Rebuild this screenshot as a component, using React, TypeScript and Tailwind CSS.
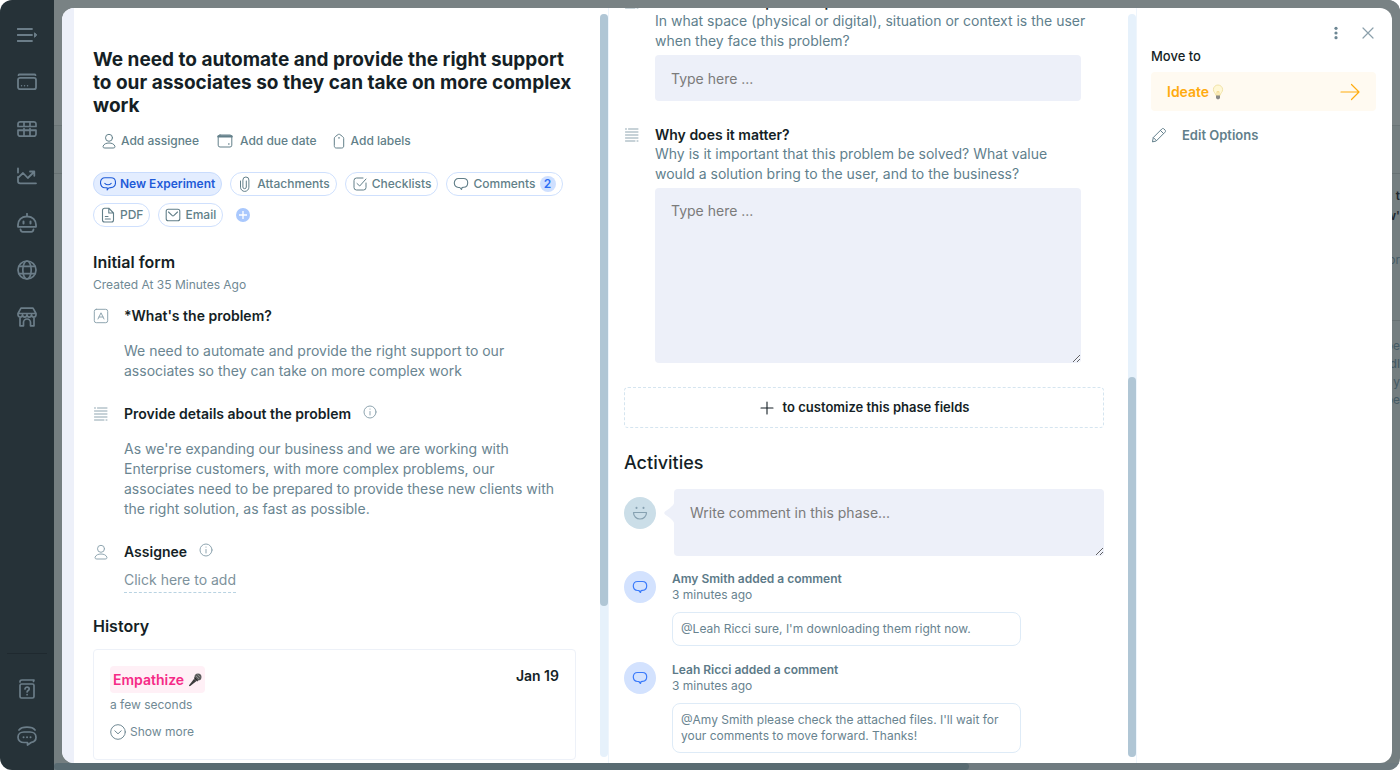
import React from "react";

type IconProps = { className?: string };

const Svg = ({ className, children, box = 20, sw = 1.3 }: IconProps & { children: React.ReactNode; box?: number; sw?: number }) => (
  <svg
    viewBox={`0 0 ${box} ${box}`}
    className={className}
    fill="none"
    stroke="currentColor"
    strokeWidth={sw}
    strokeLinecap="round"
    strokeLinejoin="round"
    aria-hidden="true"
  >
    {children}
  </svg>
);

const MenuIcon = () => (
  <Svg className="size-5" sw={1.8}>
    <path d="M0.500 4h14.500M0.500 10h14.500M0.500 16h14.500" />
    <path d="M17.800 8l2 2-2 2z" fill="currentColor" strokeWidth="1" />
  </Svg>
);
const CardsIcon = () => (
  <Svg className="size-5" sw={1.8}>
    <path d="M1.500 3.200C1.700 2.600 2 2.500 2.600 2.500h14.800c.6 0 .9.100 1.100.700" />
    <rect x="1" y="5.800" width="18" height="11.400" rx="2" />
    <path d="M4.500 13.800h.1M7.500 13.800h.1M10.500 13.800h.1" strokeWidth="1.400" />
  </Svg>
);
const GridIcon = () => (
  <Svg className="size-5" sw={1.7}>
    <path d="M1 7.500V5a2.200 2.200 0 012.200-2.200h13.600A2.200 2.200 0 0119 5v2.500zM1 11v4a2.200 2.200 0 002.200 2.200h13.600A2.200 2.200 0 0019 15v-4zM7 3v4.500M13 3v4.500M7 9.500v7.700M13 9.500v7.700M1 11.500h18" />
  </Svg>
);
const ChartIcon = () => (
  <Svg className="size-5" sw={1.8}>
    <path d="M1 2.500v4M1 11v4.300a2 2 0 002 2h16M1 11.800l5-4.800 4.800 5L17 6M13 5.500h4.300v4.300" />
  </Svg>
);
const BotIcon = () => (
  <Svg className="size-5" sw={1.8}>
    <path d="M10 .800v2.700M1 13.800v-2.100a8.200 8.200 0 018.200-8.200h1.600a8.200 8.200 0 018.200 8.200v2.100zM3.500 16.500c.3 1.700 1 2.300 2.200 2.300h8.600c1.200 0 1.900-.6 2.200-2.300" />
    <path d="M6.500 8.600v2M13.500 8.600v2" strokeWidth="2" />
  </Svg>
);
const GlobeIcon = () => (
  <Svg className="size-5" sw={1.7}>
    <circle cx="10" cy="10" r="9" />
    <ellipse cx="10" cy="10" rx="4.200" ry="9" />
    <path d="M2.200 6.300h15.600M2.200 13.700h15.600" />
  </Svg>
);
const StoreIcon = () => (
  <Svg className="size-5" sw={1.7}>
    <path d="M4 1.200h12L19 6.500v1.300a2.250 2.250 0 01-4.500 0 2.250 2.250 0 01-4.500 0 2.250 2.250 0 01-4.500 0 2.250 2.250 0 01-4.500 0V6.500zM1 6.500h18M3 10.500V18.800h3.500V15.500a3.500 3.500 0 017 0v3.300H17v-8.300" />
  </Svg>
);
const HelpIcon = () => (
  <Svg className="size-5" sw={1.7}>
    <path d="M3 3C3 1.600 3.700 1 5 1h12l-.5 1.500" />
    <rect x="3" y="5" width="14" height="14" rx="1.500" />
    <path d="M8 10c0-2.600 4.200-2.600 4.200 0 0 1.500-2.100 1.500-2.100 3M10.100 15.600v.1" />
  </Svg>
);
const ChatIcon = () => (
  <Svg className="size-5" sw={1.7}>
    <path d="M2 4C3.500 2 6 1.200 10 1.200s6.500.8 8 2.800M10.500 16.500H7c-3.500 0-6-2-6-5.200s2.500-5.300 6-5.300h6c3.500 0 6 2.100 6 5.300s-2.500 4.700-4.500 5L10.500 19z" />
    <path d="M6.500 11.200h.1M10 11.200h.1M13.500 11.200h.1" strokeWidth="1.900" />
  </Svg>
);
const PersonIcon = ({ className }: IconProps) => (
  <Svg className={className} box={16} sw={1}>
    <circle cx="8" cy="4.800" r="3.500" />
    <path d="M3.500 15C2 15 1.800 14 2.200 13c.8-2 3-3 5.800-3s5 1 5.800 3c.4 1 .2 2-1.300 2z" />
  </Svg>
);
const CalendarIcon = ({ className }: IconProps) => (
  <Svg className={className} box={16} sw={1}>
    <rect x="1.200" y="2" width="13.600" height="12" rx="1.800" />
    <path d="M1.500 3.400h13" strokeWidth="2.400" />
    <path d="M11.800 11h.1" strokeWidth="1.600" />
  </Svg>
);
const TagIcon = ({ className }: IconProps) => (
  <Svg className={className} box={16} sw={1}>
    <path d="M3.300 5.500C3.300 4.500 3.800 4 4.600 3.400L7 1.600c.7-.5 1.300-.5 2 0l2.400 1.800c.8.6 1.300 1.100 1.300 2.100V13c0 1.300-.8 2-2 2H5.300c-1.200 0-2-.7-2-2z" />
    <path d="M8 4.800v.1" strokeWidth="1.500" />
  </Svg>
);
const BubbleIcon = ({ className, sw = 1.1 }: IconProps & { sw?: number }) => (
  <Svg className={className} box={16} sw={sw}>
    <path d="M5.500 2.500h5c2.500 0 4.200 1.700 4.200 4.200s-1.600 4.400-4 4.600L9 11.600 8.500 13.500 6.800 11.500H5.500C3 11.500 1.300 9.600 1.300 7S3 2.500 5.500 2.500z" />
  </Svg>
);
const SmileBubbleIcon = ({ className }: IconProps) => (
  <Svg className={className} box={16} sw={1.1}>
    <path d="M5 1.800h6c2.900 0 4.500 2 4.500 4.700 0 2.900-1.900 4.900-4.700 5.100L8.700 12l-1.500 2v-2.200H5C2.200 11.800.5 9.500.5 6.600S2.200 1.800 5 1.800zM4.800 7.300c1.700 2 4.700 2 6.400 0" />
  </Svg>
);
const ClipIcon = ({ className }: IconProps) => (
  <Svg className={className} box={16} sw={1}>
    <path d="M3.500 5v6.200a4.200 4.200 0 008.400 0V4a3 3 0 00-6 0v7a1.700 1.700 0 003.400 0V5" />
  </Svg>
);
const CheckIcon = ({ className }: IconProps) => (
  <Svg className={className} box={16} sw={1}>
    <path d="M11 2H4.500A2.500 2.500 0 002 4.500v7A2.500 2.500 0 004.500 14h7a2.500 2.500 0 002.500-2.500V7M5 7.500L7.700 10 14 3" />
  </Svg>
);
const FileIcon = ({ className }: IconProps) => (
  <Svg className={className} box={16} sw={1.1}>
    <path d="M4.500 1.200h4.300L13.500 6v7a2 2 0 01-2 2h-7a2 2 0 01-2-2V3.200a2 2 0 012-2zM8.800 1.500V6h4.500M5.300 9.500H8M5.300 12h5" />
  </Svg>
);
const MailIcon = ({ className }: IconProps) => (
  <Svg className={className} box={16} sw={1.1}>
    <rect x="1.200" y="2.300" width="13.600" height="11.400" rx="2" />
    <path d="M3.500 5L7 8.400c.7.600 1.300.6 2 0L12.500 5" />
  </Svg>
);
const LinesIcon = () => (
  <Svg className="size-4" box={16} sw={1}>
    <path d="M1.500 2h1M4.500 2h9.500M1.500 5h12.500M1.500 8h12.500M1.500 11h12.500M1.500 14h9.500M13 14h1" />
  </Svg>
);
const LetterIcon = () => (
  <Svg className="size-4" box={16} sw={1}>
    <rect x="1.300" y="1.300" width="13.400" height="13.400" rx="2" />
    <path d="M5 11L8 4.800 11 11M6 9h4" />
  </Svg>
);
const InfoIcon = () => (
  <Svg className="size-3.5 shrink-0 text-[#8fa5b0]" box={14} sw={1}>
    <circle cx="7" cy="7" r="6" />
    <path d="M7 6.500v3.500M7 4v.2" />
  </Svg>
);
const MicEmoji = () => (
  <svg viewBox="0 0 16 16" className="size-3.5" aria-hidden="true">
    <path d="M1.500 14.800L1 14.200 7 6.500 9.800 9.200 2.200 15z" fill="#3d3d3d" />
    <circle cx="11.400" cy="4.600" r="4" fill="#5c5c5c" />
    <path d="M7.300 5.200l3.700 4.200" stroke="#222" strokeWidth="1.300" />
    <path d="M9 3.200l3.500 3.600M11 1.800l3 3" stroke="#a5a5a5" strokeWidth=".8" />
  </svg>
);
const BulbEmoji = () => (
  <svg viewBox="0 0 14 16" className="h-4 w-3.5" aria-hidden="true">
    <path d="M7 1a4.600 4.600 0 00-4.600 4.700c0 2.600 2.300 3.400 2.600 5.800h4c.3-2.400 2.600-3.200 2.600-5.800A4.600 4.600 0 007 1z" fill="#fff8d6" stroke="#f0e2a8" strokeWidth="1" />
    <path d="M6 11V7.500L7 8l1-.5V11" fill="none" stroke="#ecc765" strokeWidth=".6" />
    <path d="M5 11.500h4V14L8 15.300H6L5 14z" fill="#8a8a88" />
  </svg>
);

const navIcons: [string, React.FC][] = [
  ["Menu", MenuIcon],
  ["Pipes", CardsIcon],
  ["Database", GridIcon],
  ["Reports", ChartIcon],
  ["Automations", BotIcon],
  ["Portals", GlobeIcon],
  ["Marketplace", StoreIcon],
];

const NavButton = ({ label, Icon }: { label: string; Icon: React.FC }) => (
  <button aria-label={label} className="flex size-5 items-center justify-center">
    <Icon />
  </button>
);

const Sidebar = () => (
  <nav className="flex w-[54px] shrink-0 flex-col items-center bg-[#263238] pt-[25px] pb-6 text-[#6b7d88]">
    <div className="flex flex-col gap-[27px]">
      {navIcons.map(([label, Icon]) => (
        <NavButton key={label} label={label} Icon={Icon} />
      ))}
    </div>
    <hr className="mt-auto mb-[25px] w-10 border-[#1f292f]" />
    <div className="flex flex-col gap-[27px]">
      <NavButton label="Help" Icon={HelpIcon} />
      <NavButton label="Chat" Icon={ChatIcon} />
    </div>
  </nav>
);

/* The dimmed board that shows around the open card. */
const Board = () => (
  <div className="absolute inset-0 overflow-hidden bg-[#747e80]" aria-hidden="true">
    <div className="h-[126px] border-b border-[#6b7577] bg-[#798284]" />
    <div className="h-12 border-b border-[#677173]" />
    <div className="flex justify-end text-right text-xs whitespace-nowrap">
      <div className="w-4">
        <p className="mt-3 leading-5 font-semibold text-[#1e282d]">t</p>
        <p className="leading-5 font-semibold text-[#1e282d]">w'</p>
        <p className="mt-6 leading-5 text-[#455a64]">or</p>
        <div className="mt-[50px] border-t border-[#677173] pt-4 leading-[18px] text-[#455a64]">
          <p>be</p>
          <p className="font-medium">dl</p>
          <p>y</p>
          <p>be</p>
        </div>
      </div>
    </div>
    <div className="absolute inset-x-0 bottom-0 h-[7px] bg-[#6f7b80]">
      <div className="h-full w-[68%] rounded bg-[#596b72]" />
    </div>
  </div>
);

const Pill = ({ icon, children, active = false }: { icon: React.ReactNode; children: React.ReactNode; active?: boolean }) => (
  <button
    className={
      active
        ? "flex h-6 items-center gap-1 rounded-full border border-[#c9dcfd] bg-[#e3edff] px-1.5 text-xs font-semibold text-[#1f5bd8]"
        : "flex h-6 items-center gap-1 rounded-full border border-[#cfe0fd] bg-white px-1.5 text-xs font-medium text-[#627f89]"
    }
  >
    {icon}
    {children}
  </button>
);

const FieldHeader = ({ icon, title, info = false }: { icon: React.ReactNode; title: string; info?: boolean }) => (
  <div className="flex h-5 items-center">
    <span className="w-[31px] text-[#8fa5b0]">{icon}</span>
    <h3 className="text-sm leading-5 font-semibold text-[#151f26]">{title}</h3>
    {info && (
      <span className="ml-3 pb-1">
        <InfoIcon />
      </span>
    )}
  </div>
);

const StartForm = () => (
  <section className="min-w-0 overflow-hidden pt-10 pr-4 pl-[19px]">
    <h1 className="text-[19px] leading-[23px] font-bold text-[#151f26]">
      We need to automate and provide the right support to our associates so they can take on more complex work
    </h1>

    <div className="mt-3.5 flex h-5 items-center pl-2 text-xs font-medium text-[#627f89]">
      <button className="flex items-center gap-1">
        <PersonIcon className="size-4" />
        Add assignee
      </button>
      <button className="ml-[18px] flex items-center gap-[7px]">
        <CalendarIcon className="size-4" />
        Add due date
      </button>
      <button className="ml-3.5 flex items-center gap-1">
        <TagIcon className="size-4" />
        Add labels
      </button>
    </div>

    <div className="mt-[21px] flex flex-wrap gap-x-2 gap-y-[7px]">
      <Pill active icon={<SmileBubbleIcon className="size-4" />}>New Experiment</Pill>
      <Pill icon={<ClipIcon className="size-4" />}>Attachments</Pill>
      <Pill icon={<CheckIcon className="size-4" />}>Checklists</Pill>
      <Pill icon={<BubbleIcon className="size-4" />}>
        Comments
        <span className="flex size-4 items-center justify-center rounded-full bg-[#cfe0ff] text-xs font-semibold text-[#2b6ef5]">2</span>
      </Pill>
      <Pill icon={<FileIcon className="size-4" />}>PDF</Pill>
      <Pill icon={<MailIcon className="size-4" />}>Email</Pill>
      <button aria-label="Add more" className="ml-1 flex items-center">
        <svg viewBox="0 0 16 16" className="size-4" aria-hidden="true">
          <circle cx="8" cy="8" r="7" fill="#a9c8fd" />
          <path d="M8 4v8M4 8h8" stroke="#fff" strokeWidth="1.300" />
        </svg>
      </button>
    </div>

    <h2 className="mt-[23px] text-base leading-6 font-semibold text-[#151f26]">Initial form</h2>
    <p className="text-xs leading-[22px] text-[#708994]">Created At 35 Minutes Ago</p>

    <div className="mt-2.5 pr-6">
      <FieldHeader icon={<LetterIcon />} title="*What's the problem?" />
      <p className="mt-[15px] pl-[31px] text-sm leading-5 text-[#6a8591]">
        We need to automate and provide the right support to our associates so they can take on more complex work
      </p>
    </div>
    <div className="mt-[23px] pr-6">
      <FieldHeader icon={<LinesIcon />} title="Provide details about the problem" info />
      <p className="mt-[15px] pl-[31px] text-sm leading-5 text-[#6a8591]">
        As we're expanding our business and we are working with Enterprise customers, with more complex problems, our
        associates need to be prepared to provide these new clients with the right solution, as fast as possible.
      </p>
    </div>
    <div className="mt-[23px]">
      <FieldHeader icon={<PersonIcon className="size-4" />} title="Assignee" info />
      <button className="mt-2 ml-[31px] block border-b border-dashed border-[#b9d3e2] pb-0.5 text-sm leading-5 text-[#7e929c]">Click here to add</button>
    </div>

    <h2 className="mt-[21px] text-base leading-6 font-semibold text-[#151f26]">History</h2>
    <div className="mt-[11px] mr-2 flex h-[111px] justify-between rounded border border-[#edf1f8] px-4 pt-4 text-[#151f26]">
      <div className="flex flex-col items-start">
        <span className="flex h-[27px] items-center gap-1 rounded bg-[#fff0f6] px-[3px] text-sm font-semibold text-[#f52a86]">
          Empathize <MicEmoji />
        </span>
        <span className="mt-0.5 text-xs leading-5 text-[#708994]">a few seconds</span>
        <button className="mt-[7px] flex items-center gap-1 text-xs leading-5 text-[#708994]">
          <Svg className="size-4" box={16} sw={1}>
            <circle cx="8" cy="8" r="7.300" />
            <path d="M4.800 6.800L8 9.800l3.200-3" />
          </Svg>
          Show more
        </button>
      </div>
      <span className="text-sm leading-5 font-semibold">Jan 19</span>
    </div>
  </section>
);

const TopThumb = () => (
  <div className="py-1.5" aria-hidden="true">
    <div className="h-full rounded-full bg-[#e6f1fb]">
      <div className="h-[79.7%] rounded-full bg-[#b0c6d5]" />
    </div>
  </div>
);
const BottomThumb = () => (
  <div className="py-1.5" aria-hidden="true">
    <div className="flex h-full flex-col justify-end rounded-full bg-[#e6f1fb]">
      <div className="h-[51.2%] rounded-full bg-[#b0c6d5]" />
    </div>
  </div>
);

const PhaseField = ({ id, title, help, children }: { id: string; title: string; help: string; children: React.ReactNode }) => (
  <div className="flex pr-[23px]">
    <span className="w-[31px] shrink-0 pt-0.5 text-[#8fa5b0]">
      <LinesIcon />
    </span>
    <div className="min-w-0 flex-1">
      <label htmlFor={id} className="block text-sm leading-[19px] font-semibold text-[#151f26]">
        {title}
      </label>
      <p className="-mr-2 mb-1 text-sm leading-5 text-[#5f7f8d]">{help}</p>
      {children}
    </div>
  </div>
);

const Activity = ({ who, text }: { who: string; text: string }) => (
  <li className="flex gap-4">
    <span className="flex size-8 shrink-0 items-center justify-center rounded-full bg-[#d3e2fe] text-[#3b7bfb]">
      <BubbleIcon className="size-4" sw={1.2} />
    </span>
    <div className="text-xs leading-4 text-[#68838f]">
      <p className="font-semibold text-[#5c7a88]">{who} added a comment</p>
      <p>3 minutes ago</p>
      <p className="mt-[9px] w-[349px] rounded-lg border border-[#deebf7] p-2">{text}</p>
    </div>
  </li>
);

const Phase = () => (
  <section className="flex min-w-0 flex-col justify-end overflow-hidden border-l border-[#eef5fc] pr-6 pb-2.5 pl-[15px]">
    <PhaseField
      id="context"
      title="Where does the problem present?"
      help="In what space (physical or digital), situation or context is the user when they face this problem?"
    >
      <input id="context" placeholder="Type here ..." className="block h-[46px] w-full rounded bg-[#edf0f9] px-4 text-sm placeholder:text-[#7b7b7b]" />
    </PhaseField>
    <div className="h-6 shrink-0" />
    <PhaseField
      id="matter"
      title="Why does it matter?"
      help="Why is it important that this problem be solved? What value would a solution bring to the user, and to the business?"
    >
      <textarea id="matter" placeholder="Type here ..." className="block h-[175px] w-full rounded bg-[#edf0f9] px-4 py-[13px] text-sm placeholder:text-[#7b7b7b]" />
    </PhaseField>

    <button className="mt-6 flex h-[41px] shrink-0 items-center justify-center gap-2 rounded border border-dashed border-[#d5e5f0] text-[13px] font-semibold text-[#151f26]">
      <Svg className="size-4" box={16} sw={1.1}>
        <path d="M8 2v12M2 8h12" />
      </Svg>
      to customize this phase fields
    </button>

    <h2 className="mt-[21px] text-lg leading-7 font-medium text-[#151f26]">Activities</h2>
    <div className="mt-3 flex">
      <span className="mt-2 flex size-8 shrink-0 items-center justify-center rounded-full bg-[#cbdee8] text-[#86a1b1]">
        <Svg className="size-4" box={16} sw={1.2}>
          <path d="M1.500 7.500h13c0 4-3 6.500-6.500 6.500S1.500 11.500 1.500 7.500z" />
          <path d="M4.500 2.800v.1M11.500 2.800v.1" strokeWidth="2" />
        </Svg>
      </span>
      <svg viewBox="0 0 11 26" className="mt-[11px] ml-2 h-[26px] w-[11px] shrink-0" aria-hidden="true">
        <path d="M11 0v26c-1-5-3-6-5-8L1 14.500c-1-.8-1-2.200 0-3L6 8c2-2 4-3 5-8z" fill="#edf0f9" />
      </svg>
      <textarea
        aria-label="Write comment in this phase"
        placeholder="Write comment in this phase..."
        className="-ml-px block h-[67px] min-w-0 flex-1 rounded bg-[#edf0f9] px-4 py-3.5 text-sm placeholder:text-[#7b7b7b]"
      />
    </div>
    <ul className="mt-[15px] flex flex-col gap-4">
      <Activity who="Amy Smith" text="@Leah Ricci sure, I'm downloading them right now." />
      <Activity who="Leah Ricci" text="@Amy Smith please check the attached files. I'll wait for your comments to move forward. Thanks!" />
    </ul>
  </section>
);

const MovePanel = () => (
  <aside className="flex min-w-0 flex-col border-l border-[#eef5fc] pt-[17px] pr-4 pl-3.5">
    <div className="flex h-4 items-center justify-end gap-4">
      <button aria-label="More actions">
        <svg viewBox="0 0 16 16" className="size-4 fill-[#6d8794]" aria-hidden="true">
          <circle cx="8" cy="3.300" r="1.600" />
          <circle cx="8" cy="8" r="1.600" />
          <circle cx="8" cy="12.700" r="1.600" />
        </svg>
      </button>
      <button aria-label="Close" className="text-[#8ba0ab]">
        <Svg className="size-4" box={16} sw={1.2}>
          <path d="M3 3l10 10M13 3L3 13" />
        </Svg>
      </button>
    </div>
    <h2 className="mt-[5px] text-[13px] leading-5 font-medium text-[#151f26]">Move to</h2>
    <button className="mt-1.5 flex h-[39px] items-center justify-between rounded bg-[#fffaf1] px-4 text-sm font-semibold text-[#ffab0f]">
      <span className="flex items-center gap-0.5">
        Ideate <BulbEmoji />
      </span>
      <Svg className="size-5" sw={1.2}>
        <path d="M1 10h18M11.500 2.500L19 10l-7.500 7.500" />
      </Svg>
    </button>
    <button className="mt-[14px] flex items-center gap-[15px] text-[13px] leading-5 font-semibold text-[#627f8b]">
      <Svg className="size-4" box={16} sw={1}>
        <path d="M1.500 14.500l.8-4L10.800 2c.7-.7 1.500-.7 2.200 0l1 1c.7.700.7 1.500 0 2.200L5.500 13.700zM9.500 3.500l3 3M2.500 10.700l2.800 2.800" />
      </Svg>
      Edit Options
    </button>
  </aside>
);

export default function App() {
  return (
    <div className="flex h-screen overflow-hidden rounded-xl bg-white font-['Inter',sans-serif]">
      <Sidebar />
      <main className="relative flex min-w-0 flex-1">
        <Board />
        <div className="relative flex min-w-0 flex-1 px-2 pt-2 pb-[7px]">
          <div
            role="dialog"
            aria-label="Card details"
            className="grid min-w-0 flex-1 grid-cols-[12px_526fr_8px_520fr_8px_256px] grid-rows-[minmax(0,1fr)] overflow-hidden rounded-xl bg-white"
          >
            <div className="bg-[#edf0f9]" />
            <StartForm />
            <TopThumb />
            <Phase />
            <BottomThumb />
            <MovePanel />
          </div>
        </div>
      </main>
    </div>
  );
}
